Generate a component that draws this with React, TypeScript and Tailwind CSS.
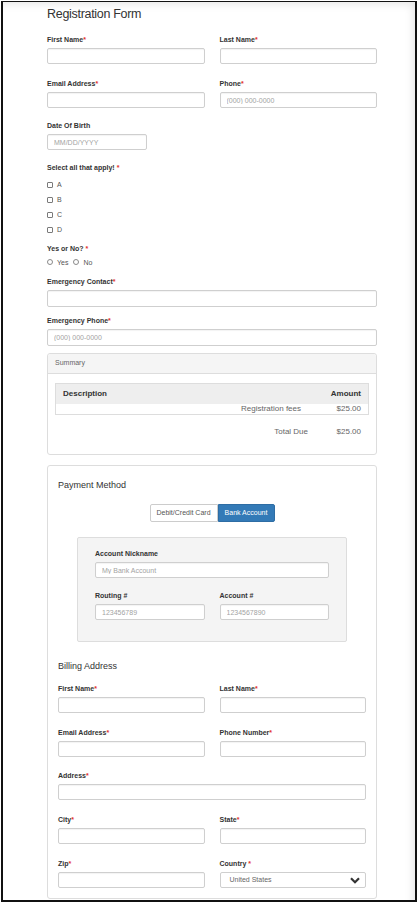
import React from "react";

function Req() {
  return <span className="text-[#e4322b]">*</span>;
}

function Label({ text, req = true, space = false, mb = "mb-[3px]" }: { text: string; req?: boolean; space?: boolean; mb?: string }) {
  return (
    <div className={`h-[10px] leading-[10px] text-[7px] font-bold text-[#333] whitespace-nowrap ${mb}`}>
      {text}
      {req ? (space ? " " : "") : null}
      {req ? <Req /> : null}
    </div>
  );
}

function Field({ placeholder = "", h = "h-[16px]", w = "w-full" }: { placeholder?: string; h?: string; w?: string }) {
  return (
    <input
      readOnly
      placeholder={placeholder}
      className={`block ${w} ${h} border border-[#cfcfcf] rounded-[2px] bg-white px-[6px] text-[7px] text-[#555] placeholder:text-[#a3a3a3] outline-none shadow-[inset_0_1px_1px_rgba(0,0,0,0.05)]`}
    />
  );
}

function Check({ l }: { l: string }) {
  return (
    <div className="h-[15px] flex items-center gap-[4px]">
      <span className="w-[6px] h-[6px] border border-[#7a7a7a] rounded-[1px] bg-white" />
      <span className="text-[7px] text-[#555] leading-none">{l}</span>
    </div>
  );
}

export default function App() {
  return (
    <div className="relative w-[418px] h-[902px] overflow-hidden bg-white font-['Liberation_Sans',Arial,sans-serif]">
      <div className="ml-[47px] w-[330px]">
        <h1 className="mt-[6px] h-[16px] leading-[16px] text-[12.5px] text-[#333] tracking-[-0.3px]">Registration Form</h1>

        <div className="mt-[13px] grid grid-cols-2 gap-x-[15px]">
          <div>
            <Label text="First Name" />
            <Field />
          </div>
          <div>
            <Label text="Last Name" />
            <Field />
          </div>
        </div>

        <div className="mt-[15px] grid grid-cols-2 gap-x-[15px]">
          <div>
            <Label text="Email Address" />
            <Field />
          </div>
          <div>
            <Label text="Phone" />
            <Field placeholder="(000) 000-0000" />
          </div>
        </div>

        <div className="mt-[13px]">
          <Label text="Date Of Birth" req={false} />
          <Field placeholder="MM/DD/YYYY" w="w-[100px]" />
        </div>

        <div className="mt-[13px]">
          <Label text="Select all that apply!" space mb="mb-[4px]" />
          <Check l="A" />
          <Check l="B" />
          <Check l="C" />
          <Check l="D" />
        </div>

        <div className="mt-[7px]">
          <Label text="Yes or No?" space mb="mb-[2px]" />
          <div className="h-[12px] flex items-center">
            <span className="w-[6px] h-[6px] rounded-full border border-[#8a8a8a] bg-white" />
            <span className="ml-[4px] text-[7px] text-[#555] leading-none">Yes</span>
            <span className="ml-[5px] w-[6px] h-[6px] rounded-full border border-[#8a8a8a] bg-white" />
            <span className="ml-[4px] text-[7px] text-[#555] leading-none">No</span>
          </div>
        </div>

        <div className="mt-[9px]">
          <Label text="Emergency Contact" />
          <Field h="h-[17px]" />
        </div>

        <div className="mt-[9px]">
          <Label text="Emergency Phone" />
          <Field h="h-[17px]" placeholder="(000) 000-0000" />
        </div>

        {/* Summary */}
        <div className="mt-[7px] border border-[#dddddd] rounded-[3px]">
          <div className="h-[20px] bg-[#f5f5f5] border-b border-[#dddddd] rounded-t-[3px] flex items-center pl-[7px] text-[7px] text-[#666]">
            Summary
          </div>
          <div className="px-[7px] pt-[9px] pb-[16px]">
            <div className="border border-[#dddddd]">
              <div className="h-[20px] bg-[#eeeeee] flex items-center justify-between px-[7px] text-[8px] font-bold text-[#333]">
                <span>Description</span>
                <span>Amount</span>
              </div>
              <div className="h-[10px] flex items-center justify-end text-[8px] text-[#666]">
                <span className="mr-[8px]">Registration fees</span>
                <span className="w-[59px] text-right pr-[7px]">$25.00</span>
              </div>
            </div>
            <div className="mt-[11px] h-[12px] flex items-center justify-end text-[8px] text-[#666] pr-[1px]">
              <span className="mr-[8px]">Total Due</span>
              <span className="w-[52px] text-right pr-[7px]">$25.00</span>
            </div>
          </div>
        </div>

        {/* Payment */}
        <div className="mt-[10px] border border-[#dddddd] rounded-[3px] px-[10px] pt-[13px] pb-[10px]">
          <div className="h-[12px] leading-[12px] text-[9px] text-[#333]">Payment Method</div>
          <div className="mt-[13px] flex justify-center">
            <div className="flex h-[18px]">
              <div className="w-[68px] h-full flex items-center justify-center border border-[#cccccc] rounded-l-[2px] bg-white text-[7px] text-[#555]">
                Debit/Credit Card
              </div>
              <div className="w-[57px] h-full flex items-center justify-center border border-[#2e6da4] rounded-r-[2px] bg-[#337ab7] text-[7px] text-white">
                Bank Account
              </div>
            </div>
          </div>

          <div className="mt-[15px] mx-[19px] bg-[#f4f4f4] border border-[#dddddd] rounded-[2px] px-[17px] pt-[11px] pb-[21px]">
            <Label text="Account Nickname" req={false} />
            <Field placeholder="My Bank Account" />
            <div className="mt-[13px] grid grid-cols-2 gap-x-[15px]">
              <div>
                <Label text="Routing #" req={false} />
                <Field placeholder="123456789" />
              </div>
              <div>
                <Label text="Account #" req={false} />
                <Field placeholder="1234567890" />
              </div>
            </div>
          </div>

          <div className="mt-[18px] h-[12px] leading-[12px] text-[9px] text-[#333]">Billing Address</div>

          <div className="mt-[12px] grid grid-cols-2 gap-x-[15px]">
            <div>
              <Label text="First Name" />
              <Field />
            </div>
            <div>
              <Label text="Last Name" />
              <Field />
            </div>
          </div>
          <div className="mt-[15px] grid grid-cols-2 gap-x-[15px]">
            <div>
              <Label text="Email Address" />
              <Field />
            </div>
            <div>
              <Label text="Phone Number" />
              <Field />
            </div>
          </div>
          <div className="mt-[14px]">
            <Label text="Address" />
            <Field />
          </div>
          <div className="mt-[15px] grid grid-cols-2 gap-x-[15px]">
            <div>
              <Label text="City" />
              <Field />
            </div>
            <div>
              <Label text="State" />
              <Field />
            </div>
          </div>
          <div className="mt-[15px] grid grid-cols-2 gap-x-[15px]">
            <div>
              <Label text="Zip" />
              <Field />
            </div>
            <div>
              <Label text="Country" space />
              <div className="h-[16px] border border-[#cfcfcf] rounded-[2px] bg-white flex items-center justify-between pl-[9px] pr-[5px]">
                <span className="text-[7px] text-[#666]">United States</span>
                <svg width="10" height="7" viewBox="0 0 10 7">
                  <path d="M1 1.2 L5 5.2 L9 1.2" fill="none" stroke="#333" strokeWidth="2.2" />
                </svg>
              </div>
            </div>
          </div>
        </div>
      </div>

      <div className="pointer-events-none absolute left-[1px] top-[1px] right-[1px] bottom-0 border-l-2 border-r-2 border-t border-b-2 border-[#111] shadow-[inset_-8px_8px_8px_-6px_rgba(0,0,0,0.10)]" />
    </div>
  );
}
